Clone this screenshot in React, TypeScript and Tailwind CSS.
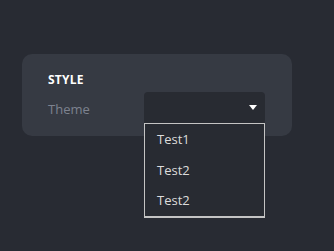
import React from "react";

export default function App() {
  const options = ["Test1", "Test2", "Test2"];
  return (
    <div
      className="w-[334px] h-[251px] bg-[#282b33] pt-[54px] pl-[22px]"
      style={{ fontFamily: '"Open Sans", "Liberation Sans", sans-serif' }}
    >
      <div className="w-[270px] h-[82px] rounded-[10px] bg-[#363a43] pl-[26px] pt-[18px]">
        <div className="text-[12px] font-bold text-white leading-[16px] tracking-[0.2px]">STYLE</div>
        <div className="flex mt-[4px]">
          <div className="w-[96px] pt-[8px] text-[13px] leading-[18px] text-[#7d828f]">Theme</div>
          <div className="relative w-[121px]">
            <div className="h-[31px] rounded-t-[4px] bg-[#282b32] flex items-center justify-end pr-[8px]">
              <svg width="8" height="5" viewBox="0 0 8 5">
                <path d="M0 0h8L4 5z" fill="#ffffff" />
              </svg>
            </div>
            <div className="absolute left-0 top-[31px] w-[121px] h-[95px] bg-[#282b32] border border-[#c4c4c4] border-b-2 flex flex-col pt-[1px]">
              {options.map((o, i) => (
                <div key={i} className="h-[31px] flex items-center pl-[12px] text-[13px] text-[#dcdcdc]">
                  {o}
                </div>
              ))}
            </div>
          </div>
        </div>
      </div>
    </div>
  );
}
